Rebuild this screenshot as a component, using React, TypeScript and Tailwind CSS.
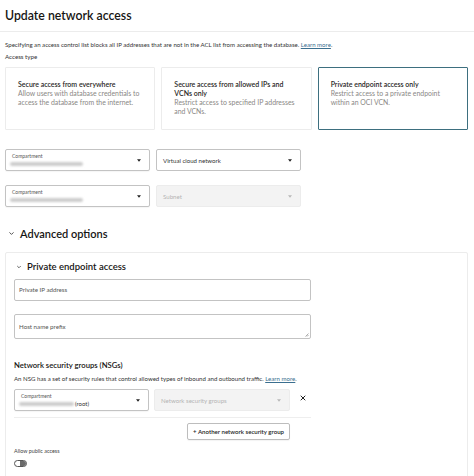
import React from "react";

const Caret = ({ light }: { light?: boolean }) => (
  <svg width="4" height="3" viewBox="0 0 4 3" className="shrink-0">
    <path d="M0 0.2 L4 0.2 L2 2.8 Z" fill={light ? "#b8b8b8" : "#222"} />
  </svg>
);

const Chevron = ({ size = 6 }: { size?: number }) => (
  <svg width={size} height={size} viewBox="0 0 10 10" className="shrink-0">
    <path d="M2.5 3.8 L5 6.3 L7.5 3.8" fill="none" stroke="#333" strokeWidth="1.2" strokeLinecap="round" strokeLinejoin="round" />
  </svg>
);

const Blur = ({ w }: { w: number }) => (
  <span className="inline-block h-[4px] rounded-sm bg-[#cdcdcd] blur-[0.8px]" style={{ width: w }} />
);

const CompSelect = ({ w, blurW, suffix }: { w: string; blurW: number; suffix?: string }) => (
  <div className={`${w} h-[22px] border border-[#c3c3c3] rounded-[2px] bg-white flex items-center pl-[4px] pr-[8px] shadow-[0_1px_1px_rgba(0,0,0,0.04)]`}>
    <div className="flex-1 flex flex-col justify-center gap-[2px]">
      <div className="pl-[2px] text-[5px] leading-[5px] text-[#555]">Compartment</div>
      <div className="flex items-center gap-[1px] h-[6px]">
        <Blur w={blurW} />
        {suffix && <span className="text-[6px] leading-[6px] text-[#333]">{suffix}</span>}
      </div>
    </div>
    <Caret />
  </div>
);

const PlainSelect = ({ w, label, disabled }: { w: string; label: string; disabled?: boolean }) => (
  <div
    className={`${w} h-[22px] border rounded-[2px] flex items-center pl-[6px] pr-[8px] ${
      disabled ? "bg-[#f3f3f3] border-[#ececec] text-[#b4b4b4]" : "bg-white border-[#c3c3c3] text-[#333]"
    }`}
  >
    <div className="flex-1 text-[6.1px] leading-[7px]">{label}</div>
    <Caret light={disabled} />
  </div>
);

const Card = ({ title, desc, selected }: { title: React.ReactNode; desc: React.ReactNode; selected?: boolean }) => (
  <div
    className={`flex-1 h-[63px] rounded-[1px] pl-[12px] pr-[6px] pt-[12px] ${
      selected ? "border border-[#3d6f7f]" : "border border-[#ececec]"
    }`}
  >
    <div className="text-[7px] leading-[9px] font-semibold text-[#2a2826] whitespace-nowrap">{title}</div>
    <div className="text-[6.9px] leading-[9px] text-[#8a8785] whitespace-nowrap">{desc}</div>
  </div>
);

export default function App() {
  return (
    <div className="w-[474px] h-[476px] overflow-hidden bg-white text-[#161513] font-['Lato',sans-serif]">
      <div className="h-[32px] border-b border-[#ececec] px-[5px] flex items-center pt-[1px]">
        <h1 className="text-[12.3px] leading-none font-semibold">Update network access</h1>
      </div>
      <div className="px-[5px] pr-[6px]">
        <p className="mt-[9px] text-[6.1px] leading-[8px] text-[#333] whitespace-nowrap">
          Specifying an access control list blocks all IP addresses that are not in the ACL list from accessing the database.{" "}
          <span className="text-[#3b6f8f] underline">Learn more</span>.
        </p>
        <div className="mt-[4px] text-[6.2px] leading-[8px] text-[#333]">Access type</div>
        <div className="mt-[6px] flex gap-[6px]">
          <Card
            title="Secure access from everywhere"
            desc={<>Allow users with database credentials to<br />access the database from the internet.</>}
          />
          <Card
            title={<>Secure access from allowed IPs and<br />VCNs only</>}
            desc={<>Restrict access to specified IP addresses<br />and VCNs.</>}
          />
          <Card
            selected
            title="Private endpoint access only"
            desc={<>Restrict access to a private endpoint<br />within an OCI VCN.</>}
          />
        </div>
        <div className="mt-[19px] flex gap-[6px]">
          <CompSelect w="w-[145px]" blurW={73} />
          <PlainSelect w="w-[145px]" label="Virtual cloud network" />
        </div>
        <div className="mt-[14px] flex gap-[6px]">
          <CompSelect w="w-[145px]" blurW={73} />
          <PlainSelect w="w-[145px]" label="Subnet" disabled />
        </div>
        <div className="mt-[20px] h-[12px] flex items-center gap-[5px] pl-[3px]">
          <Chevron size={7} />
          <span className="text-[11px] leading-none font-semibold">Advanced options</span>
        </div>
        <div className="mt-[13px] h-[240px] border border-[#ececec] rounded-[2px] pl-[8px] pt-[9px]">
          <div className="h-[10px] flex items-center gap-[5px] pl-[2px]">
            <Chevron size={6} />
            <span className="text-[9.5px] leading-none font-semibold">Private endpoint access</span>
          </div>
          <div className="mt-[7px] w-[297px] h-[22px] border border-[#c3c3c3] rounded-[2px] flex items-center pl-[4px] text-[6.2px] text-[#555]">
            Private IP address
          </div>
          <div className="relative mt-[13px] w-[297px] h-[25px] border border-[#c3c3c3] rounded-[2px] pl-[4px] pt-[8px] text-[6.2px] leading-[7px] text-[#555]">
            Host name prefix
            <svg width="4" height="4" viewBox="0 0 4 4" className="absolute right-[1px] bottom-[1px]">
              <path d="M0.5 3.5 L3.5 0.5 M2 3.5 L3.5 2" stroke="#777" strokeWidth="0.6" />
            </svg>
          </div>
          <div className="mt-[22px] text-[7.7px] leading-[9px] font-semibold">Network security groups (NSGs)</div>
          <p className="mt-[5px] text-[6.1px] leading-[8px] text-[#333] whitespace-nowrap">
            An NSG has a set of security rules that control allowed types of inbound and outbound traffic.{" "}
            <span className="text-[#3b6f8f] underline">Learn more</span>.
          </p>
          <div className="mt-[6px] flex items-center">
            <CompSelect w="w-[135px]" blurW={55} suffix="(root)" />
            <div className="ml-[5px]">
              <PlainSelect w="w-[136px]" label="Network security groups" disabled />
            </div>
            <svg width="6" height="6" viewBox="0 0 6 6" className="ml-[10px] mb-[4px]">
              <path d="M1 1 L5 5 M5 1 L1 5" stroke="#222" strokeWidth="1" strokeLinecap="round" />
            </svg>
          </div>
          <div className="mt-[6px] w-[297px] border-t border-[#eeeeee]" />
          <div className="mt-[5px] w-[276px] flex justify-end">
            <div className="h-[17px] px-[5px] border border-[#bdbdbd] rounded-[2px] flex items-center text-[6.1px] font-semibold text-[#222] whitespace-nowrap shadow-[0_1px_1px_rgba(0,0,0,0.05)]">
              + Another network security group
            </div>
          </div>
          <div className="mt-[8px] text-[5.4px] leading-[6px] text-[#444]">Allow public access</div>
          <div className="mt-[6px] w-[13px] h-[7px] rounded-full border border-[#555] bg-white flex items-center justify-end overflow-hidden">
            <div className="w-[6px] h-[7px] bg-[#6b6b6b] rounded-r-full" />
          </div>
        </div>
      </div>
    </div>
  );
}
